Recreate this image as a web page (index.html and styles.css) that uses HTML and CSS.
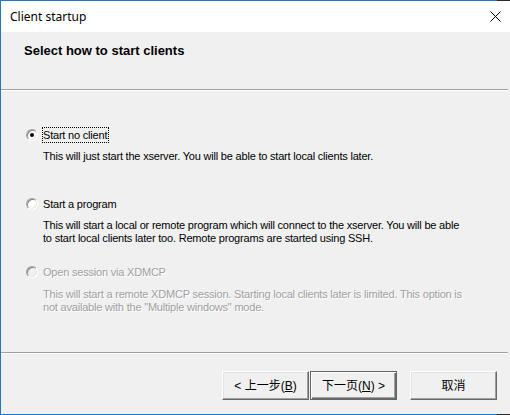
FILE: index.html
```html
<!DOCTYPE html>
<html>
<head>
<meta charset="utf-8">
<link rel="stylesheet" href="styles.css">
</head>
<body>
<div class="window">
  <div class="frame-line"></div>
  <div class="titlebar">
    <span class="title">Client startup</span>
    <svg class="close" width="11" height="11" viewBox="0 0 11 11"><path d="M0.5 0.5 L10.5 10.5 M10.5 0.5 L0.5 10.5" stroke="#000" stroke-width="1" fill="none"/></svg>
  </div>
  <div class="header">
    <h1 class="heading">Select how to start clients</h1>
  </div>
  <div class="sep"></div>
  <div class="content">
    <div class="option opt1">
      <div class="radio-row"><span class="radio checked"></span><span class="label focus">Start no client</span></div>
      <p class="desc">This will just start the xserver. You will be able to start local clients later.</p>
    </div>
    <div class="option opt2">
      <div class="radio-row"><span class="radio"></span><span class="label">Start a program</span></div>
      <p class="desc">This will start a local or remote program which will connect to the xserver. You will be able<br>to start local clients later too. Remote programs are started using SSH.</p>
    </div>
    <div class="option opt3 disabled">
      <div class="radio-row"><span class="radio"></span><span class="label">Open session via XDMCP</span></div>
      <p class="desc">This will start a remote XDMCP session. Starting local clients later is limited. This option is<br>not available with the "Multiple windows" mode.</p>
    </div>
  </div>
  <div class="sep"></div>
  <div class="footer">
    <button class="btn">&lt; 上一步(<u>B</u>)</button>
    <button class="btn default">下一页(<u>N</u>) &gt;</button>
    <button class="btn cancel">取消</button>
  </div>
  <div class="frame-line"></div>
</div>
</body>
</html>
```
FILE: styles.css
```css
html, body {
  margin: 0;
  padding: 0;
  background: #f0f0f0;
}
.window {
  width: 510px;
  height: 415px;
  box-sizing: border-box;
  border-left: 1px solid #1a78c9;
  display: flex;
  flex-direction: column;
  background: #f0f0f0;
  overflow: hidden;
}
.frame-line {
  height: 1px;
  margin-left: -1px;
  background: linear-gradient(to right, #1a78c9 497px, #2b2b2b 497px);
  flex: none;
}
.titlebar {
  height: 31px;
  background: #fff;
  display: flex;
  align-items: center;
  padding-left: 9px;
  flex: none;
}
.title {
  font-family: "Noto Sans", "Open Sans", sans-serif;
  font-size: 12px;
  color: #000;
  line-height: 16px;
}
.close {
  margin-left: auto;
  margin-right: 9px;
}
.header {
  height: 57px;
  padding: 11px 0 0 23px;
  box-sizing: border-box;
  flex: none;
}
.heading {
  margin: 0;
  font-family: "Liberation Sans", Arial, sans-serif;
  font-weight: bold;
  font-size: 13px;
  line-height: 16px;
  color: #000;
}
.sep {
  height: 1px;
  border-top: 1px solid #a0a0a0;
  background: #fff;
  margin-right: 2px;
  flex: none;
}
.content {
  height: 261px;
  padding: 36px 0 0 25px;
  box-sizing: border-box;
  flex: none;
  font-family: "Liberation Sans", Arial, sans-serif;
  font-size: 11px;
  letter-spacing: -0.2px;
  color: #000;
}
.option.opt2 { margin-top: 33px; }
.option.opt3 { margin-top: 19px; }
.radio-row {
  display: flex;
  align-items: center;
  height: 16px;
}
.radio {
  width: 12px;
  height: 12px;
  box-sizing: border-box;
  border-radius: 50%;
  background: #fff;
  border: 1px solid;
  border-color: #a0a0a0 #ffffff #ffffff #a0a0a0;
  box-shadow: inset 1px 1px 0 #8a8a8a, inset -1px -1px 0 #e3e3e3;
  position: relative;
  flex: none;
}
.radio.checked::after {
  content: "";
  position: absolute;
  left: 3px;
  top: 3px;
  width: 4px;
  height: 4px;
  border-radius: 50%;
  background: #000;
}
.label {
  margin-left: 4px;
  border: 1px solid transparent;
  line-height: 14px;
  padding-right: 1px;
}
.label.focus {
  border: 1px dotted #000;
}
.desc {
  margin: 7px 0 0 17px;
  line-height: 13px;
}
.opt3 .desc { margin-top: 8px; }
.disabled .label,
.disabled .desc {
  color: #a0a0a0;
  text-shadow: 1px 1px 0 #fff;
}
.disabled .radio {
  background: #f0f0f0;
}
.footer {
  height: 60px;
  box-sizing: border-box;
  padding: 17px 13px 0 0;
  display: flex;
  justify-content: flex-end;
  align-items: flex-start;
  flex: none;
}
.btn {
  width: 87px;
  height: 29px;
  box-sizing: border-box;
  margin: 0;
  padding: 0;
  background: #f0f0f0;
  border: 1px solid;
  border-color: #ffffff #696969 #696969 #ffffff;
  box-shadow: inset -1px -1px 0 #a0a0a0, inset 1px 1px 0 #e3e3e3;
  font-family: "Liberation Sans", "Noto Sans CJK SC", sans-serif;
  font-size: 12px;
  color: #000;
  line-height: 16px;
}
.btn.default {
  margin-left: 1px;
  border: 1px solid #646464;
  box-shadow: inset 1px 1px 0 #fff, inset -1px -1px 0 #696969, inset -2px -2px 0 #a0a0a0;
}
.btn.cancel {
  margin-left: 13px;
}
.btn u {
  text-decoration: underline;
  text-underline-offset: 1px;
}
```
